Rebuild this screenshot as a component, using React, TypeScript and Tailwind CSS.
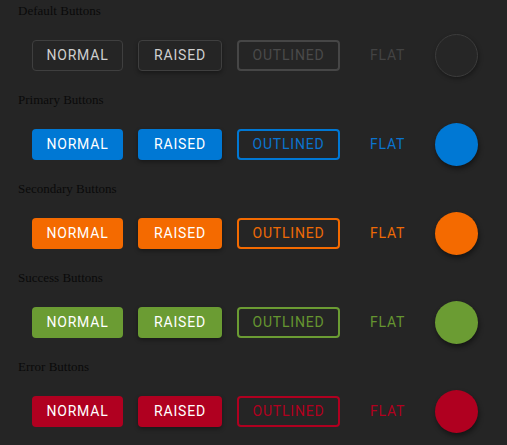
import React from "react";

type Row = {
  title: string;
  fill: string;
  outlined: string;
  flat: string;
  fab: string;
};

const rows: Row[] = [
  {
    title: "Default Buttons",
    fill: "border border-[#3f3f3f] bg-[#252525] text-[#cfcfcf]",
    outlined: "border-2 border-[#464646] text-[#4a4a4a]",
    flat: "text-[#434343]",
    fab: "border border-[#3c3c3c] bg-[#262626] shadow-[1px_2px_4px_rgba(0,0,0,0.35)]",
  },
  {
    title: "Primary Buttons",
    fill: "bg-[#0078d4] text-white",
    outlined: "border-2 border-[#0078d4] text-[#0a74cf]",
    flat: "text-[#0a74cf]",
    fab: "bg-[#0078d4] shadow-[1px_3px_5px_rgba(0,0,0,0.45)]",
  },
  {
    title: "Secondary Buttons",
    fill: "bg-[#f46a00] text-white",
    outlined: "border-2 border-[#f46a00] text-[#ee6a05]",
    flat: "text-[#ee6a05]",
    fab: "bg-[#f46a00] shadow-[1px_3px_5px_rgba(0,0,0,0.45)]",
  },
  {
    title: "Success Buttons",
    fill: "bg-[#6b9c33] text-white",
    outlined: "border-2 border-[#6b9c33] text-[#659630]",
    flat: "text-[#659630]",
    fab: "bg-[#6b9c33] shadow-[1px_3px_5px_rgba(0,0,0,0.45)]",
  },
  {
    title: "Error Buttons",
    fill: "bg-[#b00020] text-white",
    outlined: "border-2 border-[#b00020] text-[#b2001f]",
    flat: "text-[#b2001f]",
    fab: "bg-[#b00020] shadow-[1px_3px_5px_rgba(0,0,0,0.45)]",
  },
];

const base =
  "h-[31px] flex items-center justify-center rounded-[4px] text-[14px] tracking-[0.8px] font-normal font-['Roboto',sans-serif]";

export default function App() {
  return (
    <div className="w-[507px] h-[445px] bg-[#252525] overflow-hidden">
      {rows.map((r) => (
        <div key={r.title} className="h-[89px]">
          <div className="h-[17px] pl-[18px] pt-[3px] text-[13px] leading-[15px] text-[#0a0a0a] font-['Liberation_Serif',serif]">
            {r.title}
          </div>
          <div className="flex items-center gap-[15px] pl-[32px] pt-[17px]">
            <div className={`${base} w-[91px] ${r.fill}`}>NORMAL</div>
            <div
              className={`${base} w-[84px] ${r.fill} shadow-[0_2px_4px_rgba(0,0,0,0.35)]`}
            >
              RAISED
            </div>
            <div className={`${base} w-[103px] ${r.outlined}`}>OUTLINED</div>
            <div className={`${base} w-[65px] ${r.flat}`}>FLAT</div>
            <div className={`w-[43px] h-[43px] rounded-full ${r.fab}`} />
          </div>
        </div>
      ))}
    </div>
  );
}
